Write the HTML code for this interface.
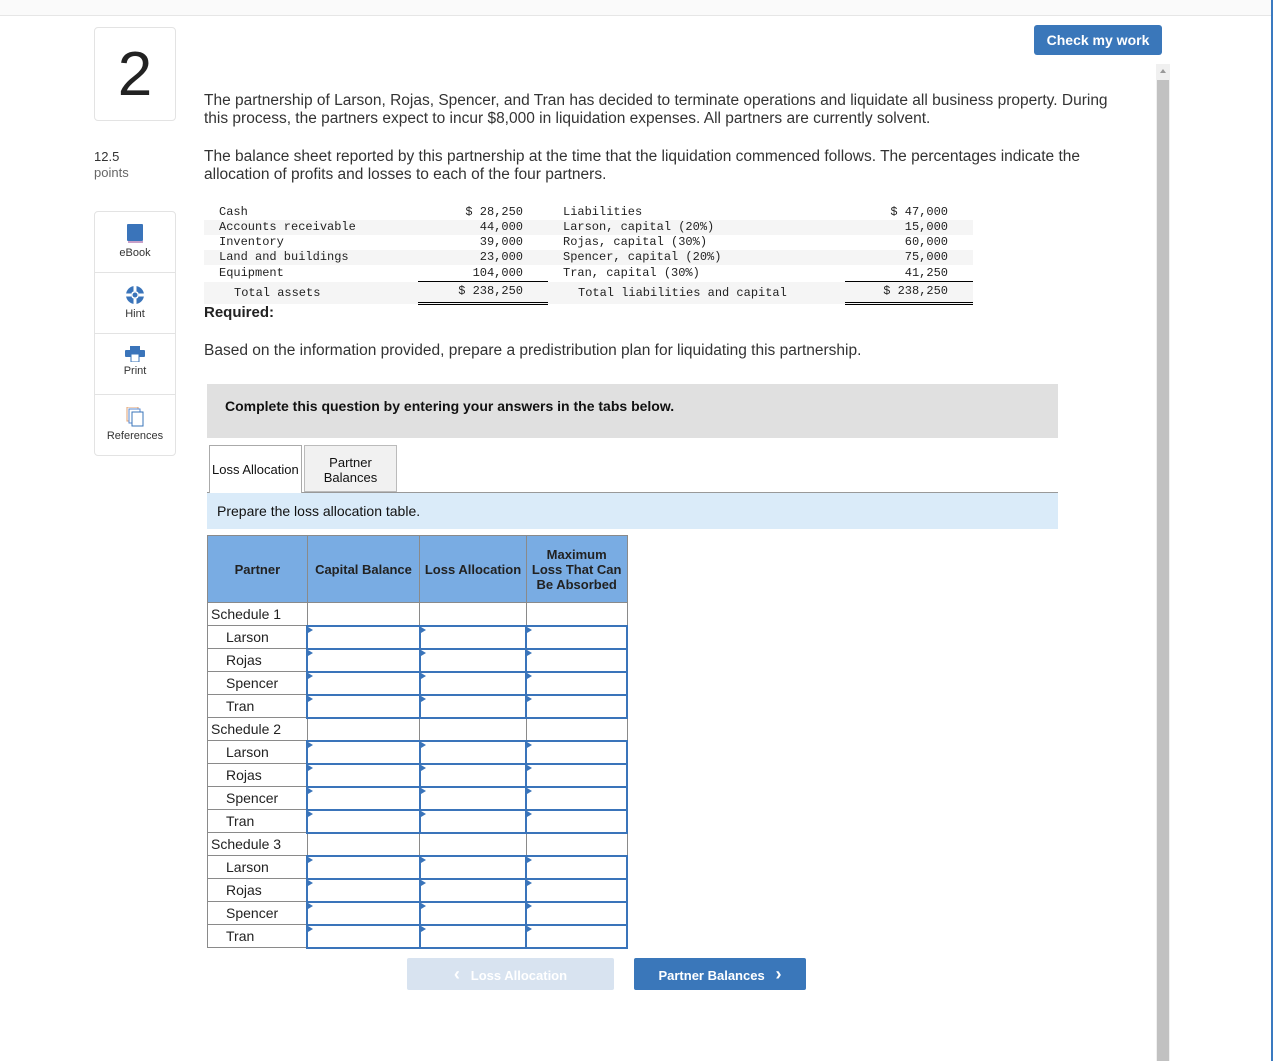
<!DOCTYPE html>
<html><head><meta charset="utf-8"><style>
*{margin:0;padding:0;box-sizing:border-box}
body{width:1273px;height:1061px;position:relative;background:#fff;font-family:"Liberation Sans",sans-serif;color:#333;overflow:hidden}
.a{position:absolute}
.topbar{left:0;top:0;width:1271px;height:16px;background:#fafafa;border-bottom:1px solid #e6e6e6}
.num{left:94px;top:27px;width:82px;height:94px;border:1px solid #e3e3e3;border-radius:4px;font-size:62px;text-align:center;line-height:94px;color:#222}
.p{font-size:15.5px;line-height:18px;color:#333}
.side{left:94px;top:211px;width:82px;height:245px;border:1px solid #e3e3e3;border-radius:4px}
.side div{height:61px;border-bottom:1px solid #e3e3e3;text-align:center;font-size:11px;color:#333;padding-top:12px}
.side div:last-child{border-bottom:none}
.mono{font-family:"Liberation Mono",monospace;font-size:12px;color:#222}
.bs div{position:absolute;height:15px;line-height:15px;white-space:pre}
.st{background:#f5f5f5}
table{border-collapse:collapse;font-size:14px;color:#222}
td,th{border:1px solid #8a8a8a;height:23px;padding:0}
th{background:#79ace3;font-weight:bold;color:#222;height:67px;line-height:15px;font-size:13px}
td.l{padding-left:3px}
td.i{padding-left:18px}
td.in{border:2px solid #3a74ba;position:relative}
td.in:before{content:"";position:absolute;left:0;top:0;border-left:5px solid #3a74ba;border-top:3px solid transparent;border-bottom:3px solid transparent}
</style></head><body>
<div class="a topbar"></div>
<div class="a" style="left:1271px;top:0;width:2px;height:1061px;background:#3a7ac0"></div>
<div class="a num">2</div>
<div class="a" style="left:94px;top:149px;font-size:13px;color:#333;line-height:16px">12.5<br><span style="color:#666">points</span></div>
<div class="a side">
<div><svg width="18" height="20" viewBox="0 0 18 20"><rect x="1" y="0" width="16" height="17" rx="1" fill="#3a74ba"/><rect x="2" y="17" width="15" height="2" fill="#c8a0c8"/></svg><br>eBook</div>
<div><svg width="20" height="20" viewBox="0 0 20 20"><circle cx="10" cy="10" r="9" fill="#3a74ba"/><circle cx="10" cy="10" r="4" fill="#fff"/><path d="M10 1v5M10 14v5M1 10h5M14 10h5" stroke="#fff" stroke-width="3"/><circle cx="10" cy="10" r="2.5" fill="#3a74ba"/></svg><br>Hint</div>
<div><svg width="20" height="16" viewBox="0 0 20 16"><rect x="5" y="0" width="10" height="4" fill="#3a74ba"/><rect x="0" y="4" width="20" height="7" rx="1" fill="#3a74ba"/><rect x="6" y="8" width="8" height="8" fill="#fff" stroke="#3a74ba"/></svg><br>Print</div>
<div><svg width="18" height="20" viewBox="0 0 18 20"><rect x="1" y="0" width="11" height="14" fill="#fff" stroke="#e0a070"/><rect x="3" y="2" width="11" height="14" fill="#fff" stroke="#5a8ad0"/><rect x="6" y="5" width="11" height="14" fill="#fff" stroke="#3a74ba"/></svg><br>References</div>
</div>
<div class="a" style="left:1034px;top:25px;width:128px;height:30px;background:#3a77ba;border-radius:3px;color:#fff;font-weight:bold;font-size:14px;text-align:center;line-height:30px">Check my work</div>
<div class="a" style="left:1156px;top:64px;width:14px;height:997px;background:#f0f0f0"></div>
<div class="a" style="left:1157px;top:80px;width:12px;height:981px;background:#c1c1c1"></div>
<div class="a" style="left:1160px;top:69px;border-left:3px solid transparent;border-right:3px solid transparent;border-bottom:4px solid #999"></div>

<div class="a p" style="left:204px;top:92px;width:925px">The partnership of Larson, Rojas, Spencer, and Tran has decided to terminate operations and liquidate all business property. During this process, the partners expect to incur $8,000 in liquidation expenses. All partners are currently solvent.</div>
<div class="a p" style="left:204px;top:148px;width:925px">The balance sheet reported by this partnership at the time that the liquidation commenced follows. The percentages indicate the allocation of profits and losses to each of the four partners.</div>

<div class="a mono bs" style="left:0;top:0">
<div class="st" style="left:204px;top:220px;width:769px"></div>
<div class="st" style="left:204px;top:250px;width:769px"></div>
<div class="st" style="left:204px;top:282px;width:769px;height:22px"></div>
<div style="left:219px;top:205px">Cash</div><div style="left:219px;top:220px">Accounts receivable</div><div style="left:219px;top:235px">Inventory</div><div style="left:219px;top:250px">Land and buildings</div><div style="left:219px;top:266px">Equipment</div><div style="left:234px;top:286px">Total assets</div>
<div style="left:418px;top:205px;width:105px;text-align:right">$ 28,250</div><div style="left:418px;top:220px;width:105px;text-align:right">44,000</div><div style="left:418px;top:235px;width:105px;text-align:right">39,000</div><div style="left:418px;top:250px;width:105px;text-align:right">23,000</div><div style="left:418px;top:266px;width:105px;text-align:right">104,000</div><div style="left:418px;top:284px;width:105px;text-align:right">$ 238,250</div>
<div style="left:418px;top:281px;width:130px;height:0;border-top:1px solid #000"></div>
<div style="left:418px;top:302px;width:130px;height:3px;border-top:1px solid #000;border-bottom:1px solid #000"></div>
<div style="left:563px;top:205px">Liabilities</div><div style="left:563px;top:220px">Larson, capital (20%)</div><div style="left:563px;top:235px">Rojas, capital (30%)</div><div style="left:563px;top:250px">Spencer, capital (20%)</div><div style="left:563px;top:266px">Tran, capital (30%)</div><div style="left:578px;top:286px">Total liabilities and capital</div>
<div style="left:845px;top:205px;width:103px;text-align:right">$ 47,000</div><div style="left:845px;top:220px;width:103px;text-align:right">15,000</div><div style="left:845px;top:235px;width:103px;text-align:right">60,000</div><div style="left:845px;top:250px;width:103px;text-align:right">75,000</div><div style="left:845px;top:266px;width:103px;text-align:right">41,250</div><div style="left:845px;top:284px;width:103px;text-align:right">$ 238,250</div>
<div style="left:845px;top:281px;width:128px;height:0;border-top:1px solid #000"></div>
<div style="left:845px;top:302px;width:128px;height:3px;border-top:1px solid #000;border-bottom:1px solid #000"></div>
</div>

<div class="a" style="left:204px;top:304px;font-size:15px;font-weight:bold;color:#222">Required:</div>
<div class="a p" style="left:204px;top:342px">Based on the information provided, prepare a predistribution plan for liquidating this partnership.</div>
<div class="a" style="left:207px;top:384px;width:851px;height:54px;background:#e0e0e0;font-weight:bold;font-size:14px;color:#111;padding:14px 0 0 18px">Complete this question by entering your answers in the tabs below.</div>
<div class="a" style="left:207px;top:492px;width:851px;height:1px;background:#999"></div>
<div class="a" style="left:209px;top:445px;width:93px;height:48px;border:1px solid #aaa;border-bottom:none;background:#fff;font-size:13px;color:#111;line-height:48px;padding-left:2px">Loss Allocation</div>
<div class="a" style="left:304px;top:445px;width:93px;height:47px;border:1px solid #bbb;background:#f1f1f1;font-size:13px;color:#111;text-align:center;line-height:15px;padding-top:9px">Partner<br>Balances</div>
<div class="a" style="left:207px;top:493px;width:851px;height:36px;background:#daebf9;font-size:14px;color:#111;padding:10px 0 0 10px">Prepare the loss allocation table.</div>

<table class="a" style="left:207px;top:535px;width:421px">
<colgroup><col style="width:100px"><col style="width:113px"><col style="width:107px"><col style="width:101px"></colgroup>
<tr><th>Partner</th><th>Capital Balance</th><th>Loss Allocation</th><th>Maximum<br>Loss That Can<br>Be Absorbed</th></tr>
<tr><td class="l">Schedule 1</td><td></td><td></td><td></td></tr>
<tr><td class="i">Larson</td><td class="in"></td><td class="in"></td><td class="in"></td></tr>
<tr><td class="i">Rojas</td><td class="in"></td><td class="in"></td><td class="in"></td></tr>
<tr><td class="i">Spencer</td><td class="in"></td><td class="in"></td><td class="in"></td></tr>
<tr><td class="i">Tran</td><td class="in"></td><td class="in"></td><td class="in"></td></tr>
<tr><td class="l">Schedule 2</td><td></td><td></td><td></td></tr>
<tr><td class="i">Larson</td><td class="in"></td><td class="in"></td><td class="in"></td></tr>
<tr><td class="i">Rojas</td><td class="in"></td><td class="in"></td><td class="in"></td></tr>
<tr><td class="i">Spencer</td><td class="in"></td><td class="in"></td><td class="in"></td></tr>
<tr><td class="i">Tran</td><td class="in"></td><td class="in"></td><td class="in"></td></tr>
<tr><td class="l">Schedule 3</td><td></td><td></td><td></td></tr>
<tr><td class="i">Larson</td><td class="in"></td><td class="in"></td><td class="in"></td></tr>
<tr><td class="i">Rojas</td><td class="in"></td><td class="in"></td><td class="in"></td></tr>
<tr><td class="i">Spencer</td><td class="in"></td><td class="in"></td><td class="in"></td></tr>
<tr><td class="i">Tran</td><td class="in"></td><td class="in"></td><td class="in"></td></tr>
</table>

<div class="a" style="left:407px;top:958px;width:207px;height:32px;background:#d8e3f0;border-radius:2px;color:#fff;font-weight:bold;font-size:13px;line-height:32px;text-align:center"><span style="font-size:18px">&lsaquo;</span>&nbsp;&nbsp; Loss Allocation</div>
<div class="a" style="left:634px;top:958px;width:172px;height:32px;background:#3a77ba;border-radius:2px;color:#fff;font-weight:bold;font-size:13px;line-height:32px;text-align:center">Partner Balances &nbsp; <span style="font-size:18px">&rsaquo;</span></div>
</body></html>
